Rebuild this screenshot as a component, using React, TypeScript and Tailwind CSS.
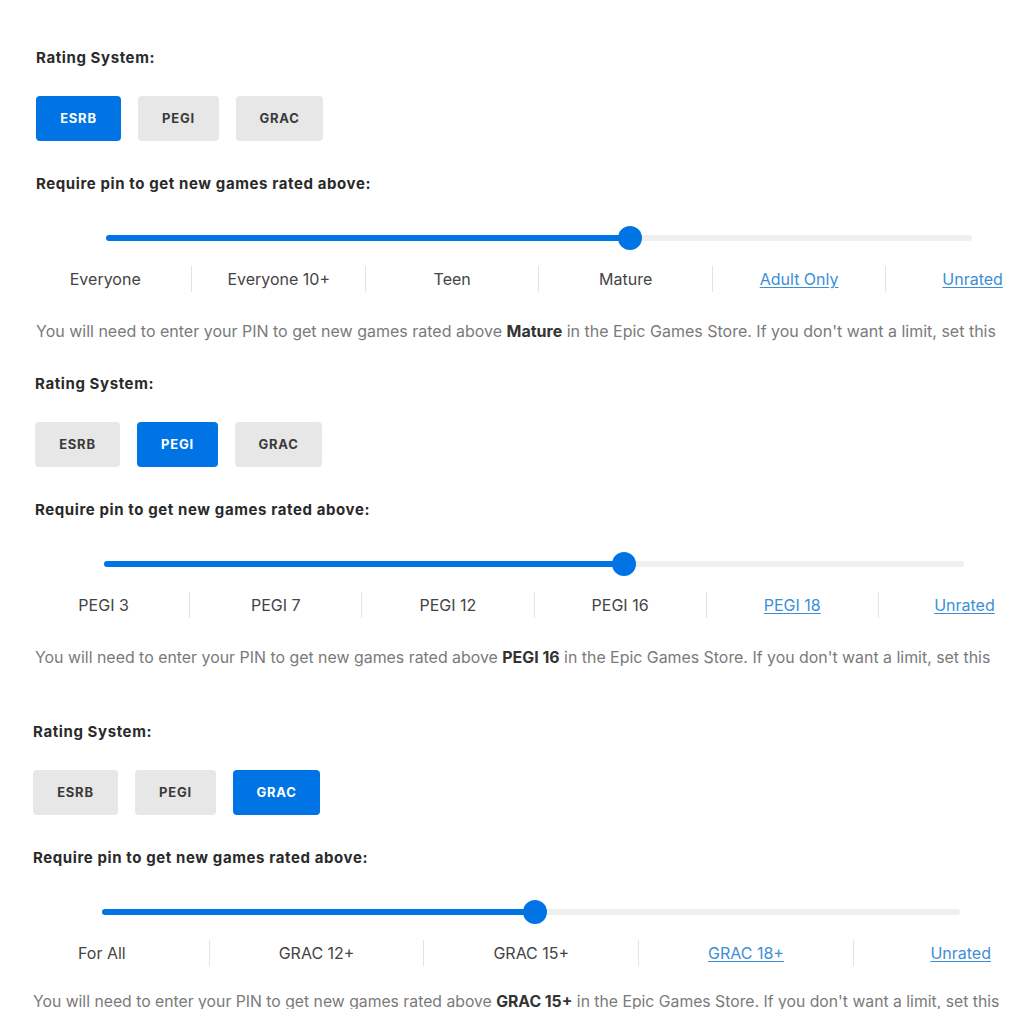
import React from "react";

type SectionProps = {
  active: number;
  levels: string[];
  selected: number;
  boldName: string;
  wrap: string;
  textLeft: string;
  gridLeft: string;
  colWidth: number;
  descClass: string;
  descText: string;
};

const systems = [
  { name: "ESRB", width: "w-[85px]" },
  { name: "PEGI", width: "w-[81px]" },
  { name: "GRAC", width: "w-[87px]" },
];

function RatingSection({
  active,
  levels,
  selected,
  boldName,
  wrap,
  textLeft,
  gridLeft,
  colWidth,
  descClass,
  descText,
}: SectionProps) {
  const trackWidth = colWidth * (levels.length - 1);
  const fill = (selected / (levels.length - 1)) * trackWidth + 4;

  return (
    <div className={wrap}>
      <div className={textLeft}>
        <h3 className="text-[15px] font-bold leading-[20px] tracking-[0.04em] text-[#2a2a2a]">Rating System:</h3>
        <div className="mt-[28px] flex gap-[17px]">
          {systems.map((s, i) => (
            <button
              key={s.name}
              className={
                i === active
                  ? `${s.width} h-[45px] rounded-[4px] bg-[#0074e4] text-[13px] font-bold tracking-[0.06em] text-white`
                  : `${s.width} h-[45px] rounded-[4px] bg-[#e7e7e7] text-[13px] font-bold tracking-[0.06em] text-[#3a3a3a]`
              }
            >
              {s.name}
            </button>
          ))}
        </div>
        <p className="mt-[33px] text-[15px] font-bold leading-[20px] tracking-[0.04em] text-[#2a2a2a]">
          Require pin to get new games rated above:
        </p>
      </div>

      <div className={gridLeft} style={{ width: colWidth * levels.length }}>
        <div className="mt-[32px] flex h-[24px] items-center" style={{ paddingLeft: colWidth / 2 }}>
          <div className="relative h-[6px] rounded-full bg-[#efefef]" style={{ width: trackWidth }}>
            <div className="absolute left-0 top-0 h-[6px] rounded-full bg-[#0074e4]" style={{ width: fill }} />
            <div
              className="absolute top-[-9px] h-[24px] w-[24px] rounded-full bg-[#0074e4]"
              style={{ left: fill - 12 }}
            />
          </div>
        </div>
        <div className="mt-[16px] flex h-[26px]">
          {levels.map((lvl, i) => (
            <div
              key={lvl}
              className={
                i === 0
                  ? "flex flex-1 items-center justify-center"
                  : "flex flex-1 items-center justify-center border-l border-[#e4e4e4]"
              }
            >
              <span
                className={
                  i > selected
                    ? "text-[16px] text-[#3c8ed8] underline underline-offset-2"
                    : "text-[16px] text-[#444]"
                }
              >
                {lvl}
              </span>
            </div>
          ))}
        </div>
      </div>

      <div className={descClass}>
        <p className={`whitespace-nowrap ${descText} leading-[22px] text-[#7a7a7a]`}>
          You will need to enter your PIN to get new games rated above{" "}
          <b className="font-bold text-[#333]">{boldName}</b> in the Epic Games Store. If you don't want a limit, set this
        </p>
      </div>
    </div>
  );
}

export default function App() {
  return (
    <div
      className="h-[1024px] w-[1024px] overflow-hidden bg-white"
      style={{ fontFamily: "Inter, 'Noto Sans', sans-serif" }}
    >
      <RatingSection
        active={0}
        levels={["Everyone", "Everyone 10+", "Teen", "Mature", "Adult Only", "Unrated"]}
        selected={3}
        boldName="Mature"
        wrap="pt-[48px]"
        textLeft="ml-[36px]"
        gridLeft="ml-[19px]"
        colWidth={173.3}
        descClass="ml-[36px] mt-[28px] overflow-hidden"
        descText="text-[16px]"
      />
      <RatingSection
        active={1}
        levels={["PEGI 3", "PEGI 7", "PEGI 12", "PEGI 16", "PEGI 18", "Unrated"]}
        selected={3}
        boldName="PEGI 16"
        wrap="pt-[32px]"
        textLeft="ml-[35px]"
        gridLeft="ml-[18px]"
        colWidth={172}
        descClass="ml-[35px] mt-[29px] overflow-hidden"
        descText="text-[15.9px]"
      />
      <RatingSection
        active={2}
        levels={["For All", "GRAC 12+", "GRAC 15+", "GRAC 18+", "Unrated"]}
        selected={2}
        boldName="GRAC 15+"
        wrap="pt-[53px]"
        textLeft="ml-[33px]"
        gridLeft="ml-[-5px]"
        colWidth={214.5}
        descClass="ml-[33px] mt-[25px] h-[18px] overflow-hidden"
        descText="text-[15.75px]"
      />
    </div>
  );
}
